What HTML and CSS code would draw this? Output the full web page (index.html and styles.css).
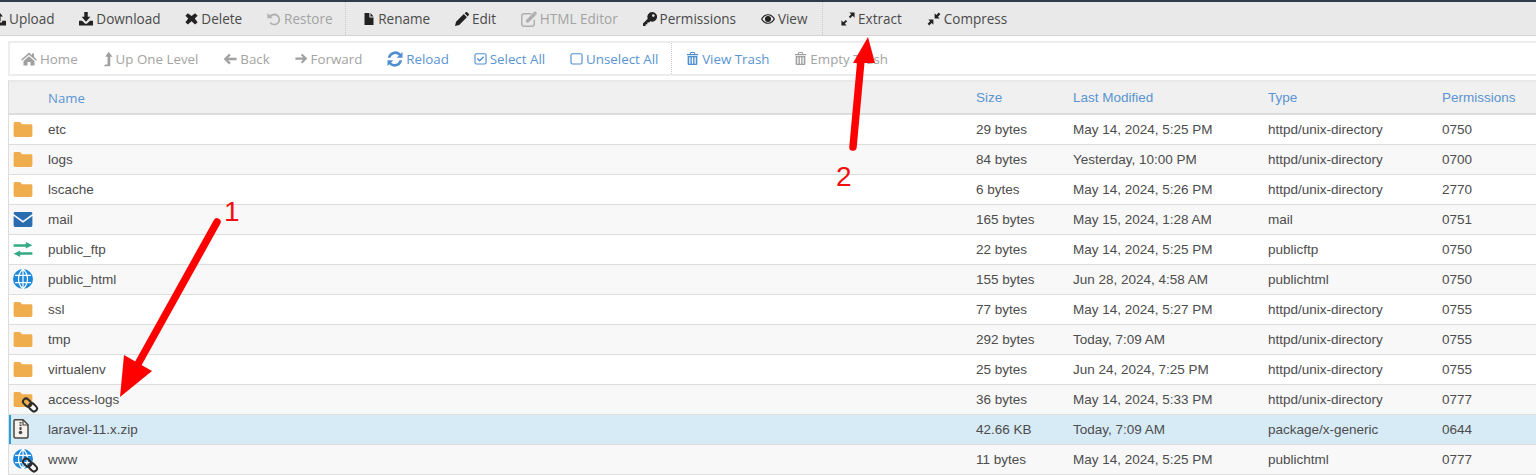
FILE: index.html
```html
<!DOCTYPE html>
<html lang="en">
<head>
<meta charset="utf-8">
<title>File Manager</title>
<link rel="stylesheet" href="styles.css">
</head>
<body>
<svg class="defs" width="0" height="0" aria-hidden="true">
  <symbol id="i-upload" viewBox="0 0 16 16"><path d="M8 0l4.500 5H9.800v5.500H6.200V5H3.500zM0 10h4.500v2h7v-2H16v5.500H0z"/></symbol>
  <symbol id="i-download" viewBox="0 0 16 16"><path d="M6 0h4v5.500h3L8 11 3 5.500h3zM0 10h3.500L7 13.300h2L12.500 10H16v5.500H0z"/></symbol>
  <symbol id="i-times" viewBox="0 0 16 16"><path d="M3.500 1.500L8 5l4.500-3.500 3 3L12 8l3.500 4.500-3 3L8 11.500l-4.500 4-3-3L4 8 .5 4.500z"/></symbol>
  <symbol id="i-undo" viewBox="0 0 16 16"><path d="M.5 1l6 6H.5zM2.800 4.400A6.800 6.800 0 1 1 3 12.800l1.500-1.500a4.700 4.700 0 1 0 0-5.300z"/></symbol>
  <symbol id="i-file" viewBox="0 0 16 16"><path d="M2 0h6.500v6H14v10H2zM10 0l4 4.500h-4z"/></symbol>
  <symbol id="i-pencil" viewBox="0 0 16 16"><path d="M0 16l1.200-4.800L10 2.400l3.600 3.600-8.800 8.800zM11 1.400L12.500.3c.5-.4 1-.4 1.400 0l1.800 1.800c.4.400.4.900 0 1.400L14.600 5z"/></symbol>
  <symbol id="i-edit" viewBox="0 0 16 16"><path d="M3 2h8l-1.500 1.500H3A1.500 1.500 0 0 0 1.500 5v8A1.500 1.500 0 0 0 3 14.500h8a1.500 1.500 0 0 0 1.500-1.500V9.500L14 8v5a3 3 0 0 1-3 3H3a3 3 0 0 1-3-3V5a3 3 0 0 1 3-3zM5 9l7.500-7.500 2.500 2.500L7.500 11.500H5zM13.300.8c.4-.4.900-.4 1.300 0l1 1c.4.400.4.900 0 1.300l-.6.600-2.300-2.300z"/></symbol>
  <symbol id="i-key" viewBox="0 0 16 16"><path d="M10.500 0a5.500 5.500 0 1 1-2 10.600L7 12H5v2H3v2H0v-3l5.400-5.400A5.500 5.500 0 0 1 10.500 0zm1.300 2.600a1.500 1.500 0 1 0 0 3 1.500 1.500 0 0 0 0-3z" fill-rule="evenodd"/></symbol>
  <symbol id="i-eye" viewBox="0 0 16 16"><path d="M8 2.500c3.500 0 6.400 2.200 8 5.500-1.600 3.300-4.500 5.500-8 5.500S1.600 11.300 0 8c1.600-3.300 4.500-5.500 8-5.500zm0 1.300C5.300 3.800 3 5.500 1.500 8 3 10.500 5.300 12.200 8 12.200s5-1.700 6.500-4.200C13 5.500 10.700 3.800 8 3.800zm0 .7a3.500 3.500 0 1 1 0 7 3.500 3.500 0 0 1 0-7z" fill-rule="evenodd"/></symbol>
  <symbol id="i-expand" viewBox="0 0 16 16"><path d="M9.500.5H15.500v6L13.300 4.300 10.500 7 9 5.500l2.700-2.800zM6.500 15.500H.5v-6l2.200 2.200L5.500 9 7 10.500l-2.700 2.800z"/></symbol>
  <symbol id="i-compress" viewBox="0 0 16 16"><path d="M8.700 7.300V1.500l2 2L13.500.7 15.300 2.500l-2.800 2.800 2 2zM7.300 8.700v5.800l-2-2L2.500 15.300.7 13.500l2.800-2.800-2-2z"/></symbol>
  <symbol id="i-home" viewBox="0 0 16 16"><path d="M8 1.500l3 2.700V2.500h2v3.500l3 2.700-1 1.100L8 3.800 1 9.800 0 8.700zM8 5.300l5.500 4.700v4.500H9.500V11h-3v3.500h-4V10z"/></symbol>
  <symbol id="i-level" viewBox="0 0 11 16"><path d="M6 0l4.500 5.500H8V16H1l1.500-2H5V5.500H2.500z"/></symbol>
  <symbol id="i-left" viewBox="0 0 16 16"><path d="M7 2l1.800 1.800L6 6.700h9.500v2.800H6l2.800 2.900L7 14.200 .8 8.100z"/></symbol>
  <symbol id="i-right" viewBox="0 0 16 16"><path d="M9 2L7.200 3.800 10 6.700H.5v2.800H10l-2.800 2.900L9 14.200l6.200-6.100z"/></symbol>
  <symbol id="i-reload" viewBox="0 0 16 16"><path d="M15.500 1v5.800H9.700l2.200-2.200A5 5 0 0 0 3.500 6.800H.9A7.400 7.400 0 0 1 13.700 2.800zM.5 15V9.200h5.800l-2.200 2.200a5 5 0 0 0 8.400-2.200h2.600A7.400 7.400 0 0 1 2.300 13.200z"/></symbol>
  <symbol id="i-check" viewBox="0 0 16 16"><path d="M3 1.500h10A2.500 2.500 0 0 1 15.500 4v9a2.500 2.500 0 0 1-2.500 2.500H3A2.500 2.500 0 0 1 .5 13V4A2.500 2.500 0 0 1 3 1.500zm0 1.400A1.100 1.100 0 0 0 1.900 4v9A1.100 1.100 0 0 0 3 14.100h10a1.100 1.100 0 0 0 1.100-1.100V4A1.100 1.100 0 0 0 13 2.900zM7 12L3.500 8.500l1.200-1.200L7 9.600l4.300-4.300 1.200 1.200z" fill-rule="evenodd"/></symbol>
  <symbol id="i-square" viewBox="0 0 16 16"><path d="M3 1.500h10A2.500 2.500 0 0 1 15.500 4v9a2.500 2.500 0 0 1-2.500 2.500H3A2.500 2.500 0 0 1 .5 13V4A2.500 2.500 0 0 1 3 1.500zm0 1.400A1.100 1.100 0 0 0 1.900 4v9A1.100 1.100 0 0 0 3 14.100h10a1.100 1.100 0 0 0 1.100-1.100V4A1.100 1.100 0 0 0 13 2.900z" fill-rule="evenodd"/></symbol>
  <symbol id="i-trash" viewBox="0 0 16 16"><path d="M5.500 0h5l1 2.500H15V4H1V2.500h3.500zM6.200 1.200L5.800 2.500h4.400l-.4-1.300zM2 5h12v9.500A1.500 1.500 0 0 1 12.500 16h-9A1.500 1.500 0 0 1 2 14.500zm2 1.500V14.500h1.500V6.500zm3.200 0V14.500h1.600V6.500zm3.300 0V14.500H12V6.500z" fill-rule="evenodd"/></symbol>
  <symbol id="f-folder" viewBox="0 0 20 16"><path d="M1.500 0h5.300L9 2.500h9.500A1.500 1.500 0 0 1 20 4v10.500a1.500 1.500 0 0 1-1.500 1.500h-17A1.500 1.500 0 0 1 0 14.500v-13A1.500 1.500 0 0 1 1.500 0z"/></symbol>
  <symbol id="f-mail" viewBox="0 0 20 16"><path d="M1.500 0h17A1.500 1.500 0 0 1 20 1.500v.5l-10 7.200L0 2v-.5A1.500 1.500 0 0 1 1.500 0zM0 4.300l10 7.200 10-7.200v10.200a1.500 1.500 0 0 1-1.500 1.500h-17A1.500 1.500 0 0 1 0 14.500z"/></symbol>
  <symbol id="f-ftp" viewBox="0 0 20 16"><path d="M13 0l7 3.500L13 7V5H0V2.300h13zM7 9v2h13v2.700H7V16L0 12.500z"/></symbol>
  <symbol id="f-globe" viewBox="0 0 20 20"><circle cx="10" cy="10" r="10"/><path d="M10 0v20M2 6.300h16M2 13.700h16M10 0c-6 5.500-6 14.500 0 20M10 0c6 5.500 6 14.500 0 20" fill="none" stroke="#fff" stroke-width="1.200"/></symbol>
  <symbol id="f-zip" viewBox="0 0 16 20"><path d="M2 .8h8l5 5V17.500a1.500 1.500 0 0 1-1.500 1.500h-11A1.500 1.500 0 0 1 1 17.500V2A1.200 1.200 0 0 1 2 .8z" fill="#f6f3ee" stroke="#4b4540" stroke-width="1.500"/><path d="M10 1v5h5" fill="none" stroke="#4b4540" stroke-width="1.200"/><path d="M6.500 3h2v1.500h-2zM6.500 5.500h2V7h-2zM6.500 8h2v3h-2z" fill="#4b4540"/><circle cx="7.500" cy="13.500" r="1.800" fill="#4b4540"/></symbol>
  <symbol id="f-link" viewBox="-2 -2 18 18"><rect x="-.4" y="1.600" width="9" height="6" rx="3" transform="rotate(45 4.100 4.600)" fill="none" stroke="#2c2c2c" stroke-width="2"/><rect x="5.400" y="6.400" width="9" height="6" rx="3" transform="rotate(45 9.900 9.400)" fill="none" stroke="#2c2c2c" stroke-width="2"/></symbol>
</svg>

<header class="topbar">
  <a class="tool tool-first"><svg class="ic"><use href="#i-upload"/></svg>Upload</a>
  <a class="tool"><svg class="ic"><use href="#i-download"/></svg>Download</a>
  <a class="tool"><svg class="ic ic-s"><use href="#i-times"/></svg>Delete</a>
  <a class="tool off"><svg class="ic"><use href="#i-undo"/></svg>Restore</a>
  <span class="sep"></span>
  <a class="tool"><svg class="ic ic-file"><use href="#i-file"/></svg>Rename</a>
  <a class="tool"><svg class="ic"><use href="#i-pencil"/></svg>Edit</a>
  <a class="tool off"><svg class="ic ic-l"><use href="#i-edit"/></svg>HTML Editor</a>
  <a class="tool"><svg class="ic"><use href="#i-key"/></svg>Permissions</a>
  <a class="tool"><svg class="ic"><use href="#i-eye"/></svg>View</a>
  <span class="sep sep-b"></span>
  <a class="tool"><svg class="ic"><use href="#i-expand"/></svg>Extract</a>
  <a class="tool"><svg class="ic"><use href="#i-compress"/></svg>Compress</a>
</header>

<nav class="navbar">
  <a class="tool off"><svg class="ic ic-l"><use href="#i-home"/></svg>Home</a>
  <a class="tool off"><svg class="ic ic-xs"><use href="#i-level"/></svg>Up One Level</a>
  <a class="tool off"><svg class="ic"><use href="#i-left"/></svg>Back</a>
  <a class="tool off"><svg class="ic ic-s"><use href="#i-right"/></svg>Forward</a>
  <a class="tool on"><svg class="ic ic-l"><use href="#i-reload"/></svg>Reload</a>
  <a class="tool on"><svg class="ic ic-s"><use href="#i-check"/></svg>Select All</a>
  <a class="tool on"><svg class="ic ic-s"><use href="#i-square"/></svg>Unselect All</a>
  <span class="sep"></span>
  <a class="tool on"><svg class="ic ic-s"><use href="#i-trash"/></svg>View Trash</a>
  <a class="tool off"><svg class="ic ic-s"><use href="#i-trash"/></svg>Empty Trash</a>
</nav>

<main class="files">
  <table>
    <colgroup><col class="c-icon"><col class="c-name"><col class="c-size"><col class="c-date"><col class="c-type"><col class="c-perm"></colgroup>
    <thead><tr><th></th><th class="th-name">Name</th><th>Size</th><th>Last Modified</th><th>Type</th><th>Permissions</th></tr></thead>
    <tbody>
      <tr><td class="ico"><svg class="fi folder"><use href="#f-folder"/></svg></td><td>etc</td><td>29 bytes</td><td>May 14, 2024, 5:25 PM</td><td>httpd/unix-directory</td><td>0750</td></tr>
      <tr><td class="ico"><svg class="fi folder"><use href="#f-folder"/></svg></td><td>logs</td><td>84 bytes</td><td>Yesterday, 10:00 PM</td><td>httpd/unix-directory</td><td>0700</td></tr>
      <tr><td class="ico"><svg class="fi folder"><use href="#f-folder"/></svg></td><td>lscache</td><td>6 bytes</td><td>May 14, 2024, 5:26 PM</td><td>httpd/unix-directory</td><td>2770</td></tr>
      <tr><td class="ico"><svg class="fi mail"><use href="#f-mail"/></svg></td><td>mail</td><td>165 bytes</td><td>May 15, 2024, 1:28 AM</td><td>mail</td><td>0751</td></tr>
      <tr><td class="ico"><svg class="fi ftp"><use href="#f-ftp"/></svg></td><td>public_ftp</td><td>22 bytes</td><td>May 14, 2024, 5:25 PM</td><td>publicftp</td><td>0750</td></tr>
      <tr><td class="ico"><svg class="fi globe"><use href="#f-globe"/></svg></td><td>public_html</td><td>155 bytes</td><td>Jun 28, 2024, 4:58 AM</td><td>publichtml</td><td>0750</td></tr>
      <tr><td class="ico"><svg class="fi folder"><use href="#f-folder"/></svg></td><td>ssl</td><td>77 bytes</td><td>May 14, 2024, 5:27 PM</td><td>httpd/unix-directory</td><td>0755</td></tr>
      <tr><td class="ico"><svg class="fi folder"><use href="#f-folder"/></svg></td><td>tmp</td><td>292 bytes</td><td>Today, 7:09 AM</td><td>httpd/unix-directory</td><td>0755</td></tr>
      <tr><td class="ico"><svg class="fi folder"><use href="#f-folder"/></svg></td><td>virtualenv</td><td>25 bytes</td><td>Jun 24, 2024, 7:25 PM</td><td>httpd/unix-directory</td><td>0755</td></tr>
      <tr><td class="ico"><svg class="fi folder"><use href="#f-folder"/></svg><svg class="badge"><use href="#f-link"/></svg></td><td>access-logs</td><td>36 bytes</td><td>May 14, 2024, 5:33 PM</td><td>httpd/unix-directory</td><td>0777</td></tr>
      <tr class="selected"><td class="ico"><svg class="fi zip"><use href="#f-zip"/></svg></td><td>laravel-11.x.zip</td><td>42.66 KB</td><td>Today, 7:09 AM</td><td>package/x-generic</td><td>0644</td></tr>
      <tr><td class="ico"><svg class="fi globe"><use href="#f-globe"/></svg><svg class="badge"><use href="#f-link"/></svg></td><td>www</td><td>11 bytes</td><td>May 14, 2024, 5:25 PM</td><td>publichtml</td><td>0777</td></tr>
    </tbody>
  </table>
</main>

<svg class="marks" viewBox="0 0 1536 475" aria-hidden="true">
  <path d="M217 222L138 364" fill="none" stroke="#ff0000" stroke-width="7.500" stroke-linecap="round"/>
  <path d="M120 397L124 355L152 371z" fill="#ff0000"/>
  <path d="M853 147L861 60" fill="none" stroke="#ff0000" stroke-width="7.500" stroke-linecap="round"/>
  <path d="M868 37L853 63L875 63z" fill="#ff0000"/>
  <text x="224" y="221" class="mark-num">1</text>
  <text x="836" y="186" class="mark-num">2</text>
</svg>
</body>
</html>
```

FILE: styles.css
```css
* { box-sizing: border-box; }
html, body { margin: 0; height: 475px; overflow: hidden; background: #fff; }
body { position: relative; font-family: "Open Sans", sans-serif; font-size: 13.55px; color: #444; }
.defs { position: absolute; }

.topbar, .navbar { display: flex; align-items: center; gap: 24.8px; white-space: nowrap; }
.topbar { height: 36px; background: #e9e9e9; border-top: 2px solid #2d3b4b; border-bottom: 1px solid #d4d4d4; }
.navbar { height: 35px; margin: 5px 0 0 8px; padding-left: 11px; gap: 24.85px; font-size: 13.35px; background: #fff; border: 2px solid #ededed; border-right: 0; }

.tool { display: inline-flex; align-items: center; gap: 3px; color: #4a4a4a; line-height: 18px; }
.tool-first { margin-left: -8px; }
.off { color: #a3a3a3; }
.on { color: #5a94d2; }
.ic { width: 14px; height: 14px; fill: currentColor; flex: none; }
.ic-s { width: 13px; height: 13px; }
.ic-xs { width: 10px; height: 16px; }
.ic-l { width: 16px; height: 16px; }
.ic-file { width: 12px; height: 14px; }
.topbar .ic { fill: #222; }
.topbar .off .ic { fill: #b0b0b0; }
.navbar .off .ic { fill: #a0a0a0; }
.navbar .on .ic { fill: #4f8fd0; }
.sep { align-self: stretch; width: 0; border-left: 1px dotted #c8c8c8; }
.topbar .sep { margin: 0 -8px 0 -12px; }
.topbar .sep-b { margin: 0 -7px 0 -10px; }
.navbar .sep { margin: 0 -11px 0 -12px; }

.files { margin: 4px 0 0 8px; border-left: 1px solid #ddd; border-top: 2px solid #e8e8e8; }
table { width: 1528px; table-layout: fixed; border-collapse: collapse; font-family: "Liberation Sans", Arial, sans-serif; font-size: 13.5px; color: #4c4c4c; }
.c-icon { width: 39px; }
.c-name { width: 928px; }
.c-size { width: 97px; }
.c-date { width: 195px; }
.c-type { width: 174px; }
th { height: 32px; padding: 0; background: #f0f0f0; border-bottom: 2px solid #ddd; text-align: left; font-weight: 400; color: #5a94d2; }
.th-name { font-family: "Open Sans", sans-serif; font-size: 13.2px; }
td { height: 30px; padding: 0; border-bottom: 1px solid #ddd; white-space: nowrap; }
tbody tr:nth-child(even) td { background: #f8f8f8; }
tbody tr.selected td { background: #d7ebf7; }
tr.selected .ico { box-shadow: inset 2px 0 0 #2a9fd8; }

.ico { position: relative; }
.fi { display: block; margin-left: 4px; width: 20px; height: 15px; }
.folder { fill: #f0ad4e; }
.mail { fill: #2a6cb0; }
.ftp { fill: #35a884; }
.globe { fill: #1d88dc; height: 20px; }
.zip { margin-left: 4px; width: 16px; height: 20px; }
.badge { position: absolute; left: 12px; top: 11px; width: 18px; height: 18px; }

.marks { position: absolute; left: 0; top: 0; width: 1536px; height: 475px; pointer-events: none; }
.mark-num { font-family: "Liberation Sans", Arial, sans-serif; font-size: 28px; fill: #f01010; }
```
